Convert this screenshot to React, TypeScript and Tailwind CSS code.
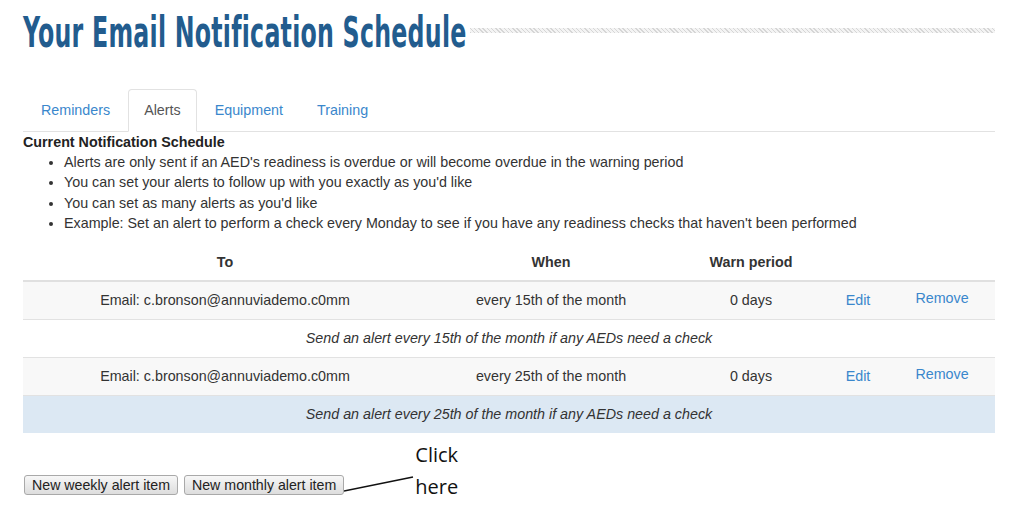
import React from 'react'

const ARIAL = "font-['Liberation_Sans',Arial,sans-serif]"

const rows = [
  { to: 'Email: c.bronson@annuviademo.c0mm', when: 'every 15th of the month', warn: '0 days', note: 'Send an alert every 15th of the month if any AEDs need a check', info: false },
  { to: 'Email: c.bronson@annuviademo.c0mm', when: 'every 25th of the month', warn: '0 days', note: 'Send an alert every 25th of the month if any AEDs need a check', info: true },
]

const bullets = [
  "Alerts are only sent if an AED's readiness is overdue or will become overdue in the warning period",
  "You can set your alerts to follow up with you exactly as you'd like",
  "You can set as many alerts as you'd like",
  "Example: Set an alert to perform a check every Monday to see if you have any readiness checks that haven't been performed",
]

const tabs = ['Reminders', 'Alerts', 'Equipment', 'Training']

const btn =
  'h-[20px] px-[7px] text-[14.2px] leading-[18px] text-[#222] border border-[#a9a9a9] rounded-[3px] bg-[linear-gradient(#f7f7f7,#dddddd)] whitespace-nowrap'

export default function App() {
  return (
    <div className={`w-[1024px] h-[505px] bg-white overflow-hidden ${ARIAL} text-[14.3px] text-[#333]`}>
      <div className="w-[972px] ml-[23px]">
        {/* Title */}
        <div className="flex items-center h-[62px] pt-[1px]">
          <h1 className="w-[440px] shrink-0 h-[50px] overflow-visible whitespace-nowrap">
            <span className="inline-block origin-left scale-x-[0.612] font-['Liberation_Sans_Narrow','DejaVu_Sans_Condensed',sans-serif] font-bold text-[43px] leading-[50px] text-[#225c8e] tracking-[0.4px]">
              Your Email Notification Schedule
            </span>
          </h1>
          <div className="flex-1 ml-[7px] h-[5px] mb-[2px] bg-[repeating-linear-gradient(45deg,#d6d6d6_0px,#d6d6d6_1px,#f4f4f4_1px,#f4f4f4_3px)]" />
        </div>

        {/* Tabs */}
        <div className="mt-[27px] flex pl-[2px] gap-[2px] border-b border-[#e2e2e2]">
          {tabs.map((t) => (
            <div
              key={t}
              className={
                t === 'Alerts'
                  ? 'px-[15px] py-[10px] leading-[20px] -mb-px border border-[#e2e2e2] border-b-white rounded-t-[4px] bg-white text-[#555]'
                  : 'px-[15px] py-[10px] leading-[20px] border border-transparent text-[#3a87cc]'
              }
            >
              {t}
            </div>
          ))}
        </div>

        {/* Description */}
        <div className="leading-[20px]">
          <div className="font-bold text-[#222]">Current Notification Schedule</div>
          <ul className="list-disc pl-[41px] text-[#333] leading-[20.3px]">
            {bullets.map((b) => (
              <li key={b}>{b}</li>
            ))}
          </ul>
        </div>

        {/* Table */}
        <table className="mt-[11px] w-full table-fixed border-collapse text-[#333]">
          <colgroup>
            <col className="w-[404px]" />
            <col className="w-[248px]" />
            <col className="w-[152px]" />
            <col className="w-[62px]" />
            <col />
          </colgroup>
          <thead>
            <tr className="border-b-2 border-[#e0e0e0]">
              <th className="p-[8px] leading-[20px] text-center font-bold">To</th>
              <th className="p-[8px] leading-[20px] text-center font-bold">When</th>
              <th className="p-[8px] leading-[20px] text-center font-bold">Warn period</th>
              <th className="p-[8px]" />
              <th className="p-[8px]" />
            </tr>
          </thead>
          <tbody>
            {rows.map((r, i) => (
              <React.Fragment key={i}>
                <tr className="bg-[#f8f8f8] border-t border-[#e2e2e2]">
                  <td className="p-[8px] leading-[21px] text-center">{r.to}</td>
                  <td className="p-[8px] leading-[21px] text-center">{r.when}</td>
                  <td className="p-[8px] leading-[21px] text-center">{r.warn}</td>
                  <td className="p-[8px] leading-[21px] text-center text-[#3a87cc]">Edit</td>
                  <td className="p-[8px] pb-[10px] pt-[6px] leading-[21px] text-center text-[#3a87cc]">Remove</td>
                </tr>
                <tr className={`${r.info ? 'bg-[#dce8f3]' : 'bg-white'} border-t border-[#e2e2e2]`}>
                  <td colSpan={5} className="p-[8px] leading-[21px] text-center italic">
                    {r.note}
                  </td>
                </tr>
              </React.Fragment>
            ))}
          </tbody>
        </table>

        {/* Buttons + annotation */}
        <div className="mt-[11px] flex items-start">
          <div className="flex gap-[6px] mt-[31px] ml-px">
            <button className={btn}>New weekly alert item</button>
            <button className={btn}>New monthly alert item</button>
          </div>
          <svg width="71" height="60" viewBox="0 0 71 60" className="shrink-0">
            <line x1="0" y1="47" x2="69" y2="33" stroke="#111" strokeWidth="1.6" />
          </svg>
          <div className="font-['Open_Sans','Noto_Sans',sans-serif] text-[20px] leading-[32px] text-[#111] -mt-[5px]">
            <div>Click</div>
            <div>here</div>
          </div>
        </div>
      </div>
    </div>
  )
}
